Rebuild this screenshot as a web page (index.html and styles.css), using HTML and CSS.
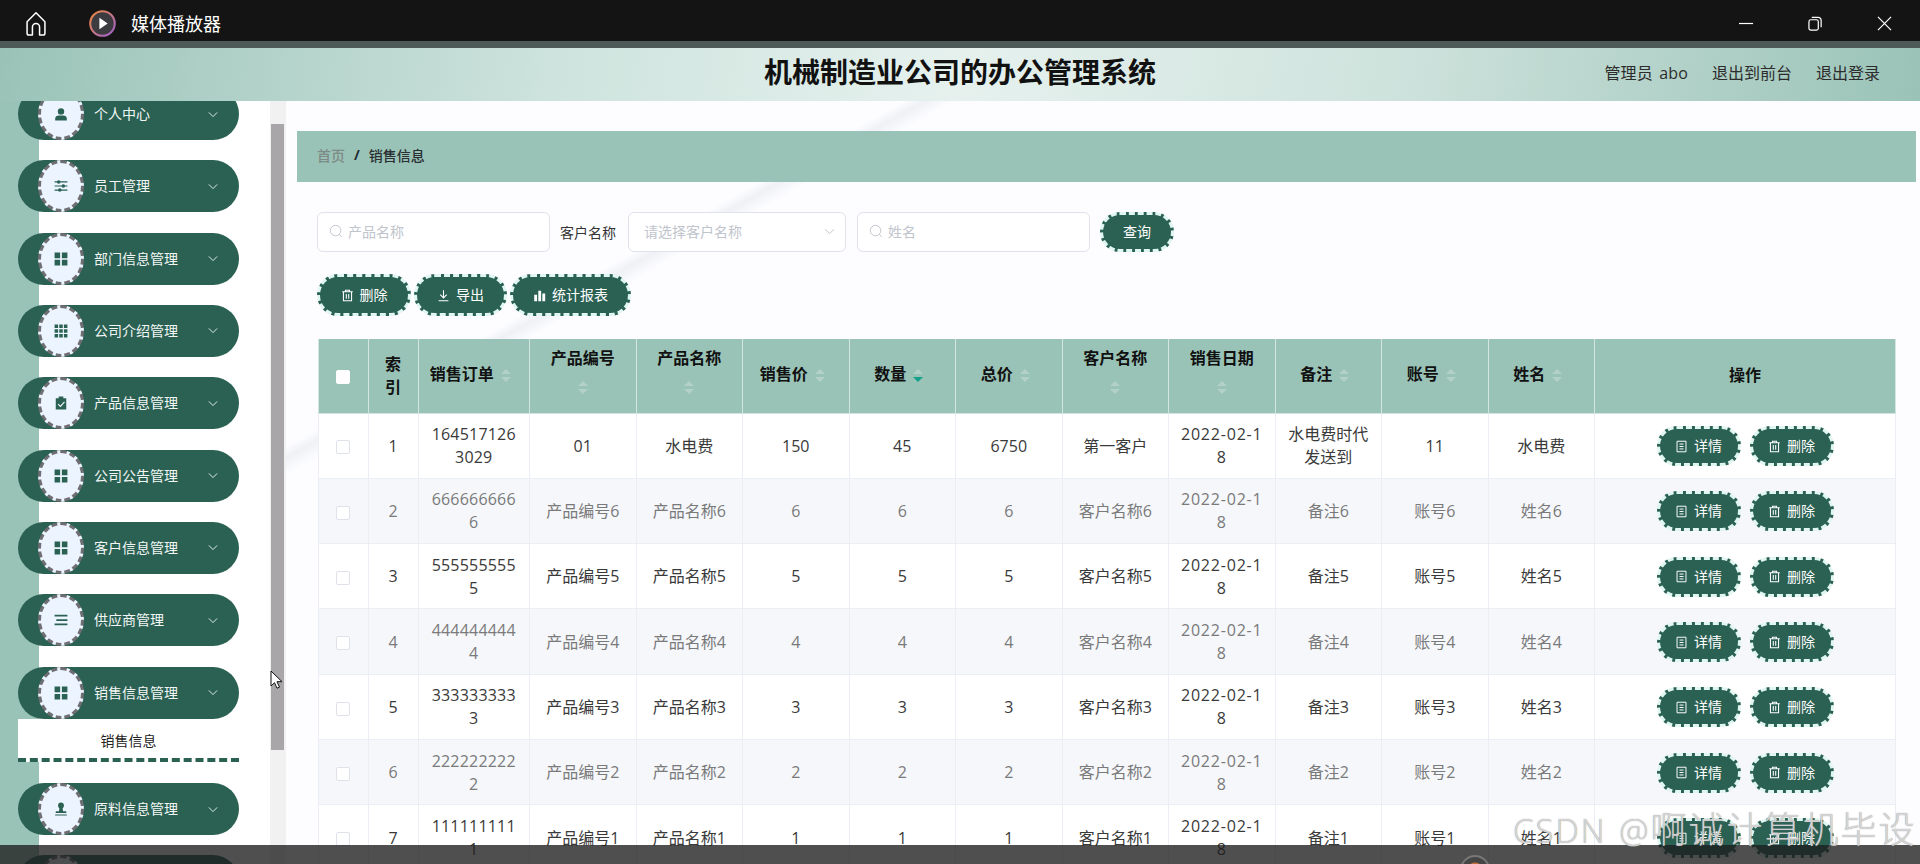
FILE: index.html
```html
<!DOCTYPE html>
<html lang="zh-CN">
<head>
<meta charset="utf-8">
<title>机械制造业公司的办公管理系统</title>
<link rel="stylesheet" href="styles.css">
</head>
<body>
<svg class="sprite" xmlns="http://www.w3.org/2000/svg">
  <symbol id="i-user" viewBox="0 0 24 24"><circle cx="12" cy="7.500" r="5.500" fill="currentColor"/><path d="M2 23v-3c0-3.500 3-5.500 6-5.500h8c3 0 6 2 6 5.500v3z" fill="currentColor"/></symbol>
  <symbol id="i-sliders" viewBox="0 0 24 24"><path d="M1 5h22M1 12h22M1 19h22" stroke="currentColor" stroke-width="2" fill="none"/><circle cx="8" cy="5" r="3" fill="currentColor"/><circle cx="16" cy="12" r="3" fill="currentColor"/><circle cx="10" cy="19" r="3" fill="currentColor"/></symbol>
  <symbol id="i-grid" viewBox="0 0 24 24"><path d="M1 1h9.500v9.500H1zM13.500 1H23v9.500h-9.500zM1 13.500h9.500V23H1zM13.500 13.500H23V23h-9.500z" fill="currentColor"/></symbol>
  <symbol id="i-grid9" viewBox="0 0 24 24"><path d="M1 1h6v6H1zM9 1h6v6H9zM17 1h6v6h-6zM1 9h6v6H1zM9 9h6v6H9zM17 9h6v6h-6zM1 17h6v6H1zM9 17h6v6H9zM17 17h6v6h-6z" fill="currentColor"/></symbol>
  <symbol id="i-clip" viewBox="0 0 24 24"><path d="M8 1h8v3h5v19H3V4h5z" fill="currentColor"/><path d="M7 14l4 4 7-8" stroke="#ecf5ff" stroke-width="2" fill="none"/></symbol>
  <symbol id="i-lines" viewBox="0 0 24 24"><path d="M1 3h22v3H1zM4 10.500h19v3H4zM1 18h22v3H1z" fill="currentColor"/></symbol>
  <symbol id="i-stamp" viewBox="0 0 24 24"><circle cx="12" cy="6" r="5" fill="currentColor"/><path d="M9.500 9h5l1 7H21v3H3v-3h5.500zM2 21.500h20V23H2z" fill="currentColor"/></symbol>
  <symbol id="i-chev" viewBox="0 0 12 8"><path d="M1 1.500l5 5 5-5" stroke="currentColor" stroke-width="1.100" fill="none"/></symbol>
  <symbol id="i-search" viewBox="0 0 16 16"><circle cx="7.500" cy="7.500" r="6" stroke="currentColor" stroke-width="1.100" fill="none"/><path d="M11.800 11.800l2.700 2.700" stroke="currentColor" stroke-width="1.100"/></symbol>
  <symbol id="i-trash" viewBox="0 0 16 16"><path d="M1.500 3.500h13M5.500 3.500V1.500h5v2M3 3.500v11h10v-11M6.500 6v6M9.500 6v6" stroke="currentColor" stroke-width="1.300" fill="none"/></symbol>
  <symbol id="i-down" viewBox="0 0 16 16"><path d="M8 1.500v9M4 7l4 4 4-4M2 14.500h12" stroke="currentColor" stroke-width="1.300" fill="none"/></symbol>
  <symbol id="i-chart" viewBox="0 0 16 16"><path d="M1.500 7h3.500v8H1.500zM6.500 2h3.500v13H6.500zM11.500 5.500H15V15h-3.500z" fill="currentColor"/></symbol>
  <symbol id="i-doc" viewBox="0 0 16 16"><path d="M2.500 1.500h11v13h-11zM5.500 5h5M5.500 8h5M5.500 11h5" stroke="currentColor" stroke-width="1.200" fill="none"/></symbol>
</svg>

<div class="app">
  <div class="titlebar">
    <svg class="home-icon" viewBox="0 0 24 28"><path d="M2 12L12 2l10 10v13a2 2 0 0 1-2 2h-4v-9a4 4 0 0 0-8 0v9H4a2 2 0 0 1-2-2z" stroke="#fff" stroke-width="1.700" fill="none" stroke-linejoin="round"/></svg>
    <svg class="player-icon" viewBox="0 0 26 26"><defs><linearGradient id="ring" x1="0" y1="0" x2="1" y2="1"><stop offset="0" stop-color="#f08a3c"/><stop offset="1" stop-color="#9b5fd0"/></linearGradient></defs><circle cx="13" cy="13" r="11.800" fill="#3c3c40" stroke="url(#ring)" stroke-width="2"/><path d="M10 7.500l8 5.500-8 5.500z" fill="#fff"/></svg>
    <span class="player-name">媒体播放器</span>
    <div class="win-controls">
      <svg class="win-icon" viewBox="0 0 16 16"><path d="M0 8h15" stroke="#fff" stroke-width="1.300"/></svg>
      <svg class="win-icon" viewBox="0 0 16 16"><rect x="1" y="4" width="10" height="11" rx="2" stroke="#fff" stroke-width="1.300" fill="none"/><path d="M4 1.500h7a3 3 0 0 1 3 3V12" stroke="#fff" stroke-width="1.300" fill="none"/></svg>
      <svg class="win-icon" viewBox="0 0 16 16"><path d="M1 1l14 14M15 1L1 15" stroke="#fff" stroke-width="1.300"/></svg>
    </div>
  </div>
  <div class="titlebar-edge"></div>

  <header class="topbar">
    <div></div>
    <h1 class="sys-title">机械制造业公司的办公管理系统</h1>
    <nav class="top-links">
      <span class="user-name">管理员 abo</span><span>退出到前台</span><span>退出登录</span>
    </nav>
  </header>

  <div class="workspace">
    <aside class="sidebar">
      <div class="menu">
        <div class="menu-item"><span class="menu-badge"><svg class="menu-glyph"><use href="#i-user"/></svg></span><span class="menu-text">个人中心</span><svg class="menu-chev"><use href="#i-chev"/></svg></div>
        <div class="menu-item"><span class="menu-badge"><svg class="menu-glyph"><use href="#i-sliders"/></svg></span><span class="menu-text">员工管理</span><svg class="menu-chev"><use href="#i-chev"/></svg></div>
        <div class="menu-item"><span class="menu-badge"><svg class="menu-glyph"><use href="#i-grid"/></svg></span><span class="menu-text">部门信息管理</span><svg class="menu-chev"><use href="#i-chev"/></svg></div>
        <div class="menu-item"><span class="menu-badge"><svg class="menu-glyph"><use href="#i-grid9"/></svg></span><span class="menu-text">公司介绍管理</span><svg class="menu-chev"><use href="#i-chev"/></svg></div>
        <div class="menu-item"><span class="menu-badge"><svg class="menu-glyph"><use href="#i-clip"/></svg></span><span class="menu-text">产品信息管理</span><svg class="menu-chev"><use href="#i-chev"/></svg></div>
        <div class="menu-item"><span class="menu-badge"><svg class="menu-glyph"><use href="#i-grid"/></svg></span><span class="menu-text">公司公告管理</span><svg class="menu-chev"><use href="#i-chev"/></svg></div>
        <div class="menu-item"><span class="menu-badge"><svg class="menu-glyph"><use href="#i-grid"/></svg></span><span class="menu-text">客户信息管理</span><svg class="menu-chev"><use href="#i-chev"/></svg></div>
        <div class="menu-item"><span class="menu-badge"><svg class="menu-glyph"><use href="#i-lines"/></svg></span><span class="menu-text">供应商管理</span><svg class="menu-chev"><use href="#i-chev"/></svg></div>
        <div class="menu-item open"><span class="menu-badge"><svg class="menu-glyph"><use href="#i-grid"/></svg></span><span class="menu-text">销售信息管理</span><svg class="menu-chev"><use href="#i-chev"/></svg></div>
        <div class="submenu">销售信息</div>
        <div class="menu-item"><span class="menu-badge"><svg class="menu-glyph"><use href="#i-stamp"/></svg></span><span class="menu-text">原料信息管理</span><svg class="menu-chev"><use href="#i-chev"/></svg></div>
        <div class="menu-item"><span class="menu-badge"><svg class="menu-glyph"><use href="#i-grid"/></svg></span></div>
      </div>
      <div class="scrolltrack"><div class="scrollthumb"></div></div>
    </aside>

    <main class="main">
      <div class="crumbs"><span class="crumb-home">首页</span><span class="crumb-sep">/</span><span class="crumb-now">销售信息</span></div>

      <div class="filters">
        <label class="field"><svg class="field-icon"><use href="#i-search"/></svg><input class="field-input" placeholder="产品名称"></label>
        <span class="filter-label">客户名称</span>
        <label class="field select"><input class="field-input" placeholder="请选择客户名称"><svg class="select-chev"><use href="#i-chev"/></svg></label>
        <label class="field"><svg class="field-icon"><use href="#i-search"/></svg><input class="field-input" placeholder="姓名"></label>
        <button class="btn btn-query"><span class="btn-label">查询</span></button>
      </div>

      <div class="toolbar">
        <button class="btn btn-del"><svg class="btn-icon"><use href="#i-trash"/></svg><span class="btn-label">删除</span></button>
        <button class="btn btn-exp"><svg class="btn-icon"><use href="#i-down"/></svg><span class="btn-label">导出</span></button>
        <button class="btn btn-stat"><svg class="btn-icon"><use href="#i-chart"/></svg><span class="btn-label">统计报表</span></button>
      </div>

      <table class="grid">
        <colgroup>
          <col class="c-check"><col class="c-index"><col class="c-order">
          <col class="c-std"><col class="c-std"><col class="c-std"><col class="c-std"><col class="c-std">
          <col class="c-std"><col class="c-std"><col class="c-std"><col class="c-std"><col class="c-std">
          <col class="c-ops">
        </colgroup>
        <thead>
          <tr>
            <th><span class="check check-head"></span></th>
            <th>索引</th>
            <th>销售订单<span class="sort"></span></th>
            <th>产品编号<span class="sort"></span></th>
            <th>产品名称<span class="sort"></span></th>
            <th>销售价<span class="sort"></span></th>
            <th>数量<span class="sort sort-desc"></span></th>
            <th>总价<span class="sort"></span></th>
            <th>客户名称<span class="sort"></span></th>
            <th>销售日期<span class="sort"></span></th>
            <th>备注<span class="sort"></span></th>
            <th>账号<span class="sort"></span></th>
            <th>姓名<span class="sort"></span></th>
            <th>操作</th>
          </tr>
        </thead>
        <tbody>
          <tr>
            <td><span class="check"></span></td><td>1</td><td>164517126<br>3029</td><td>01</td><td>水电费</td><td>150</td><td>45</td><td>6750</td><td>第一客户</td><td>2022-02-1<br>8</td><td>水电费时代<br>发送到</td><td>11</td><td>水电费</td>
            <td><div class="ops"><button class="btn btn-row"><svg class="btn-icon"><use href="#i-doc"/></svg><span class="btn-label">详情</span></button><button class="btn btn-row"><svg class="btn-icon"><use href="#i-trash"/></svg><span class="btn-label">删除</span></button></div></td>
          </tr>
          <tr>
            <td><span class="check"></span></td><td>2</td><td>666666666<br>6</td><td>产品编号6</td><td>产品名称6</td><td>6</td><td>6</td><td>6</td><td>客户名称6</td><td>2022-02-1<br>8</td><td>备注6</td><td>账号6</td><td>姓名6</td>
            <td><div class="ops"><button class="btn btn-row"><svg class="btn-icon"><use href="#i-doc"/></svg><span class="btn-label">详情</span></button><button class="btn btn-row"><svg class="btn-icon"><use href="#i-trash"/></svg><span class="btn-label">删除</span></button></div></td>
          </tr>
          <tr>
            <td><span class="check"></span></td><td>3</td><td>555555555<br>5</td><td>产品编号5</td><td>产品名称5</td><td>5</td><td>5</td><td>5</td><td>客户名称5</td><td>2022-02-1<br>8</td><td>备注5</td><td>账号5</td><td>姓名5</td>
            <td><div class="ops"><button class="btn btn-row"><svg class="btn-icon"><use href="#i-doc"/></svg><span class="btn-label">详情</span></button><button class="btn btn-row"><svg class="btn-icon"><use href="#i-trash"/></svg><span class="btn-label">删除</span></button></div></td>
          </tr>
          <tr>
            <td><span class="check"></span></td><td>4</td><td>444444444<br>4</td><td>产品编号4</td><td>产品名称4</td><td>4</td><td>4</td><td>4</td><td>客户名称4</td><td>2022-02-1<br>8</td><td>备注4</td><td>账号4</td><td>姓名4</td>
            <td><div class="ops"><button class="btn btn-row"><svg class="btn-icon"><use href="#i-doc"/></svg><span class="btn-label">详情</span></button><button class="btn btn-row"><svg class="btn-icon"><use href="#i-trash"/></svg><span class="btn-label">删除</span></button></div></td>
          </tr>
          <tr>
            <td><span class="check"></span></td><td>5</td><td>333333333<br>3</td><td>产品编号3</td><td>产品名称3</td><td>3</td><td>3</td><td>3</td><td>客户名称3</td><td>2022-02-1<br>8</td><td>备注3</td><td>账号3</td><td>姓名3</td>
            <td><div class="ops"><button class="btn btn-row"><svg class="btn-icon"><use href="#i-doc"/></svg><span class="btn-label">详情</span></button><button class="btn btn-row"><svg class="btn-icon"><use href="#i-trash"/></svg><span class="btn-label">删除</span></button></div></td>
          </tr>
          <tr>
            <td><span class="check"></span></td><td>6</td><td>222222222<br>2</td><td>产品编号2</td><td>产品名称2</td><td>2</td><td>2</td><td>2</td><td>客户名称2</td><td>2022-02-1<br>8</td><td>备注2</td><td>账号2</td><td>姓名2</td>
            <td><div class="ops"><button class="btn btn-row"><svg class="btn-icon"><use href="#i-doc"/></svg><span class="btn-label">详情</span></button><button class="btn btn-row"><svg class="btn-icon"><use href="#i-trash"/></svg><span class="btn-label">删除</span></button></div></td>
          </tr>
          <tr>
            <td><span class="check"></span></td><td>7</td><td>111111111<br>1</td><td>产品编号1</td><td>产品名称1</td><td>1</td><td>1</td><td>1</td><td>客户名称1</td><td>2022-02-1<br>8</td><td>备注1</td><td>账号1</td><td>姓名1</td>
            <td><div class="ops"><button class="btn btn-row"><svg class="btn-icon"><use href="#i-doc"/></svg><span class="btn-label">详情</span></button><button class="btn btn-row"><svg class="btn-icon"><use href="#i-trash"/></svg><span class="btn-label">删除</span></button></div></td>
          </tr>
        </tbody>
      </table>
    </main>
  </div>
</div>

<svg class="cursor" viewBox="0 0 13 19"><path d="M1 1v15l3.500-3.300 2.500 5.500 2.500-1.100-2.500-5.400h5z" fill="#fff" stroke="#111" stroke-width="1"/></svg>
<div class="player-bar"><span class="player-knob"></span></div>
<div class="watermark"><span class="wm-latin">CSDN @</span>啊诚计算机毕设</div>
</body>
</html>
```
FILE: styles.css
```css
* { box-sizing: border-box; }
html, body {
  margin: 0;
  height: 100%;
  overflow: hidden;
}
body {
  position: relative;
  font-family: "Open Sans", "Noto Sans CJK SC", sans-serif;
  color: #333;
  background: #fff;
}
.sprite { display: none; }

.app {
  display: flex;
  flex-direction: column;
  height: 864px;
}

/* window chrome */
.titlebar {
  flex: none;
  height: 41px;
  background: #141414;
  display: flex;
  align-items: center;
  padding: 5px 28px 0 25px;
  color: #fff;
}
.home-icon { width: 22px; height: 25px; }
.player-icon { width: 27px; height: 27px; margin-left: 42px; }
.player-name { font-size: 18px; margin-left: 15px; }
.win-controls {
  margin-left: auto;
  display: flex;
  gap: 54px;
  align-items: center;
}
.win-icon { width: 15px; height: 15px; display: block; }
.titlebar-edge {
  flex: none;
  height: 7px;
  background: #4e5a57;
}

/* system header */
.topbar {
  flex: none;
  height: 53px;
  display: grid;
  grid-template-columns: 1fr auto 1fr;
  align-items: center;
  padding: 0 40px 6px;
  background: linear-gradient(100deg, #9ac3b7 0%, #cfe4de 30%, #e6f1ee 50%, #cfe3dd 72%, #9ac3b7 100%);
}
.sys-title {
  margin: 0;
  font-size: 28px;
  line-height: 48px;
  font-weight: 700;
  color: #111;
  white-space: nowrap;
}
.top-links {
  display: flex;
  justify-content: flex-end;
  gap: 24px;
  font-size: 16px;
  color: #2c2c2c;
}
.user-name { word-spacing: 2px; letter-spacing: 0.15px; }

/* body layout */
.workspace {
  flex: 1;
  min-height: 0;
  display: flex;
}
.sidebar {
  flex: none;
  width: 286px;
  display: flex;
  overflow: hidden;
  background: linear-gradient(90deg, #9ac3b7 39px, #fff 39px);
}
.menu {
  flex: none;
  width: 270px;
  padding-left: 18px;
  margin-top: -13px;
}
.menu-item {
  width: 221px;
  height: 52px;
  margin-bottom: 20.33px;
  display: flex;
  align-items: center;
  padding: 0 21px 0 20px;
  border-radius: 26px;
  background: #2b6153;
  color: #f2f7f5;
}
.menu-item.open { margin-bottom: 0; }
.menu-badge {
  flex: none;
  width: 46px;
  height: 52px;
  border: 3px dashed #6f6e73;
  border-radius: 50%;
  background: #ecf5ff;
  color: #2b6153;
  display: flex;
  align-items: center;
  justify-content: center;
}
.menu-glyph { width: 14px; height: 14px; }
.menu-text {
  margin-left: 10px;
  padding-bottom: 2px;
  font-size: 14px;
  white-space: nowrap;
}
.menu-chev {
  width: 10px;
  height: 7px;
  margin-left: auto;
}
.submenu {
  width: 221px;
  height: 43.5px;
  margin-bottom: 21px;
  border-bottom: 4px dashed #2b6153;
  background: #fff;
  color: #222;
  font-size: 14px;
  line-height: 43px;
  text-align: center;
}
.scrolltrack {
  flex: none;
  width: 16px;
  background: #f1f1f1;
  padding: 23px 2px 0 1px;
}
.scrollthumb {
  height: 626px;
  background: #a8a6a8;
}

/* main panel */
.main {
  flex: 1;
  min-width: 0;
  overflow: hidden;
  padding: 30px 4px 0 11px;
  background:
    linear-gradient(150.800deg, transparent 20.600%, #eff1f6 21.300%, transparent 22.300%),
    #fdfdff;
}
.crumbs {
  height: 51px;
  padding: 0 0 4px 20px;
  display: flex;
  align-items: center;
  background: #9ac3b7;
  font-size: 14px;
}
.crumb-home { color: #7d8a86; font-weight: 500; }
.crumb-sep { margin: 0 9px; color: #1d2b33; font-weight: 700; }
.crumb-now { color: #2a2f33; font-weight: 500; }

.filters {
  margin: 30px 0 0 20px;
  display: flex;
  align-items: center;
  height: 40px;
}
.field {
  flex: none;
  width: 233px;
  height: 40px;
  border: 1px solid #dfe2ea;
  border-radius: 6px;
  background: #fff;
  display: flex;
  align-items: center;
  padding: 0 0 2px 11px;
  color: #c0c4cc;
}
.field-icon { width: 14px; height: 14px; flex: none; }
.field-input {
  flex: 1;
  min-width: 0;
  border: 0;
  outline: 0;
  padding: 0;
  margin-left: 5px;
  background: transparent;
  font: 14px "Open Sans", "Noto Sans CJK SC", sans-serif;
}
.field-input::placeholder { color: #c0c4cc; opacity: 1; }
.filter-label {
  margin: 0 12px 0 10px;
  font-size: 14px;
  color: #333;
  white-space: nowrap;
}
.field.select { width: 218px; margin-right: 11px; padding: 0 10px 2px 10px; }
.select-chev { width: 11px; height: 7px; flex: none; }
.btn {
  display: inline-flex;
  align-items: center;
  justify-content: center;
  gap: 6px;
  padding: 0;
  border: 3px dashed #e0f6f0;
  border-radius: 21px;
  background: #2b6153;
  color: #fff;
  font: 14px "Open Sans", "Noto Sans CJK SC", sans-serif;
  white-space: nowrap;
}
.btn-label { padding-bottom: 2px; }
.btn-icon { width: 13px; height: 13px; flex: none; }
.btn-query { width: 74px; height: 40px; margin-left: 10px; }
.toolbar {
  margin: 22px 0 0 20px;
  display: flex;
  gap: 3px;
  height: 42px;
}
.btn-del { width: 94px; }
.btn-exp { width: 93px; }
.btn-stat { width: 121px; }

/* data table */
.grid {
  margin: 23px 0 0 21px;
  width: 1577px;
  table-layout: fixed;
  border-collapse: collapse;
  font-size: 16px;
  line-height: 23px;
  text-align: center;
}
.c-check { width: 49.5px; }
.c-index { width: 50px; }
.c-order { width: 111.5px; }
.c-std { width: 106.5px; }
.c-ops { width: 301px; }
.grid th {
  height: 74px;
  padding: 0 10px;
  background: #9ac3b7;
  border: 1px solid #d4e5e0;
  border-top: 0;
  color: #111;
  font-weight: 700;
}
.grid td {
  height: 65.33px;
  padding: 1px 10px 0;
  border: 1px solid #ebeef5;
  word-break: break-all;
}
.grid td:nth-child(3) { letter-spacing: 0.2px; }
.grid td:nth-child(10) { letter-spacing: 0.8px; }
.grid tbody tr:nth-child(odd) td { background: #fff; color: #3a3a3a; }
.grid tbody tr:nth-child(even) td { background: #f5f7fb; color: #7a7a7a; }
.sort {
  display: inline-flex;
  flex-direction: column;
  align-items: center;
  justify-content: center;
  gap: 3px;
  width: 24px;
  height: 34px;
  vertical-align: middle;
}
.sort::before,
.sort::after {
  content: "";
  width: 0;
  height: 0;
  border-left: 5px solid transparent;
  border-right: 5px solid transparent;
}
.sort::before { border-bottom: 5px solid #b4d1c9; }
.sort::after { border-top: 5px solid #b4d1c9; }
.sort-desc::after { border-top-color: #14a08a; }
.check {
  display: inline-block;
  width: 14px;
  height: 14px;
  border: 1px solid #dfe2ea;
  border-radius: 2px;
  background: #fff;
  vertical-align: middle;
}
.check-head { border-color: #fff; }
.ops {
  display: flex;
  justify-content: center;
  gap: 9px;
}
.btn-row { width: 84px; height: 40px; border-radius: 20px; }

/* overlays */
.cursor {
  position: absolute;
  left: 270px;
  top: 670px;
  width: 13px;
  height: 19px;
}
.player-bar {
  position: absolute;
  left: 0;
  right: 0;
  bottom: 0;
  height: 19px;
  overflow: hidden;
  background: rgba(30, 30, 30, 0.78);
}
.player-knob {
  position: absolute;
  left: 1460px;
  top: 10px;
  width: 30px;
  height: 30px;
  border: 2px solid #777;
  border-radius: 50%;
  background: radial-gradient(circle, #c0703a 7px, #454545 8px);
}
.watermark {
  position: absolute;
  left: 1513px;
  top: 804px;
  font-size: 36px;
  font-weight: 300;
  line-height: 52px;
  letter-spacing: 2px;
  white-space: nowrap;
  color: rgba(235, 235, 235, 0.8);
  text-shadow: 0 0 1px #777;
}
.wm-latin { font-size: 33px; letter-spacing: 2px; word-spacing: 2px; }
```
